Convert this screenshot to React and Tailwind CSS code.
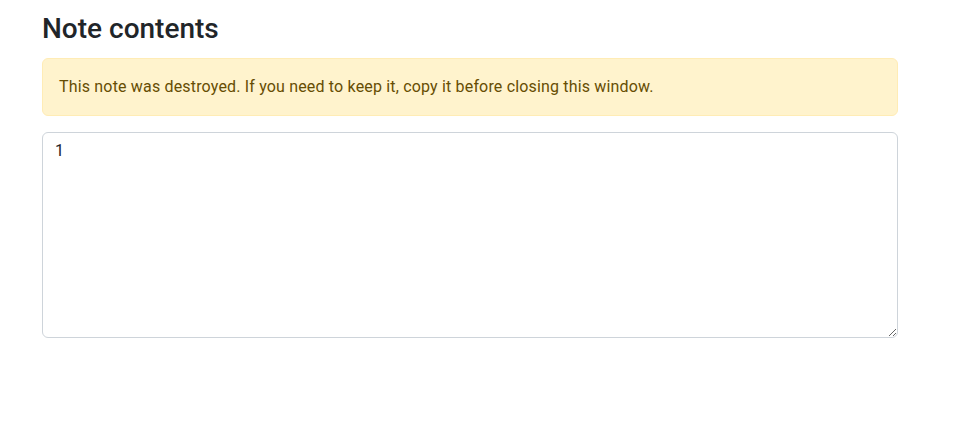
export default function App() {
  return (
    <div
      className="min-h-screen bg-white text-[#212529]"
      style={{ fontFamily: 'Roboto, "Noto Sans", "Liberation Sans", sans-serif' }}
    >
      <div className="ml-[42px] w-[856px] pt-[12px]">
        <h3 className="mb-3 text-[28px] font-medium leading-[1.2]">Note contents</h3>
        <div className="mb-4 rounded-md border border-[#ffecb5] bg-[#fff3cd] p-4 text-base leading-6 tracking-[0.17px] text-[#664d03]">
          This note was destroyed. If you need to keep it, copy it before closing this window.
        </div>
        <textarea
          rows={8}
          readOnly
          defaultValue="1"
          className="block w-full rounded-md border border-[#ced4da] bg-white px-3 py-1.5 text-base leading-6 text-[#212529] outline-none"
        />
      </div>
    </div>
  );
}
